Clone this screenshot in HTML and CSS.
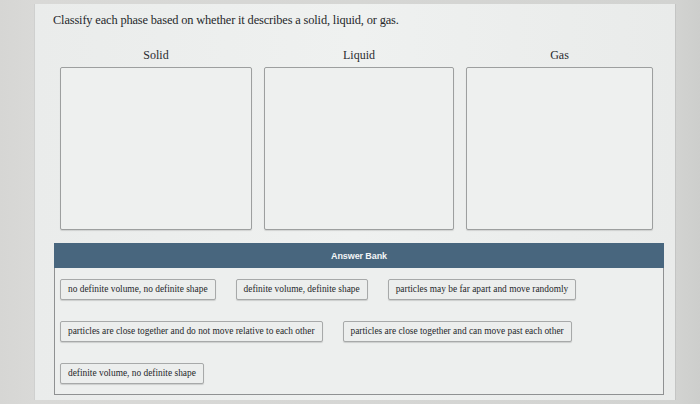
FILE: index.html
```html
<!DOCTYPE html>
<html lang="en">
<head>
<meta charset="utf-8">
<title>Classify phases</title>
<link rel="stylesheet" href="styles.css">
</head>
<body>
  <main class="panel">
    <p class="prompt">Classify each phase based on whether it describes a solid, liquid, or gas.</p>

    <div class="targets">
      <section class="target">
        <h2 class="target-label">Solid</h2>
        <div class="dropzone"></div>
      </section>
      <section class="target">
        <h2 class="target-label">Liquid</h2>
        <div class="dropzone"></div>
      </section>
      <section class="target">
        <h2 class="target-label">Gas</h2>
        <div class="dropzone"></div>
      </section>
    </div>

    <section class="bank">
      <header class="bank-head">Answer Bank</header>
      <div class="bank-body">
        <span class="chip">no definite volume, no definite shape</span>
        <span class="chip">definite volume, definite shape</span>
        <span class="chip">particles may be far apart and move randomly</span>
        <span class="chip">particles are close together and do not move relative to each other</span>
        <span class="chip">particles are close together and can move past each other</span>
        <span class="chip">definite volume, no definite shape</span>
      </div>
    </section>
  </main>
</body>
</html>
```

FILE: styles.css
```css
html, body {
  margin: 0;
  padding: 0;
}

body {
  width: 700px;
  height: 404px;
  overflow: hidden;
  background: linear-gradient(to right, #d6d6d4 0, #d9d9d7 34px, #d2d3d1 676px, #cdcecc 700px);
  font-family: "Liberation Serif", "Times New Roman", serif;
  color: #2f3133;
}

.panel {
  box-sizing: border-box;
  margin: 4px 0 0 34px;
  width: 642px;
  height: 396px;
  padding: 8px 13px 0 18px;
  background: linear-gradient(to right, #eaeceb, #eff1f0 50%, #e9ebea);
  border-left: 1px solid #cfd0cf;
  border-right: 1px solid #c4c5c4;
}

.prompt {
  margin: 0;
  font-size: 12.4px;
  line-height: 16px;
  letter-spacing: -0.15px;
  color: #26282b;
}

.targets {
  display: grid;
  grid-template-columns: 192px 190px 187px;
  column-gap: 12px;
  width: 593px;
  margin: 20px 0 0 7px;
}

.target {
  display: flex;
  flex-direction: column;
  align-items: stretch;
}

.target-label {
  margin: 0 0 5px;
  font-size: 12px;
  font-weight: normal;
  line-height: 14px;
  text-align: center;
  color: #2a2c2f;
}

.dropzone {
  height: 161px;
  border: 1px solid #9d9f9f;
  border-radius: 2px;
  background: #eef0ef;
  box-shadow: 0 1px 1px rgba(0, 0, 0, 0.12);
}

.bank {
  width: 610px;
  margin: 13px 0 0 1px;
}

.bank-head {
  height: 25px;
  line-height: 26px;
  background: #48667e;
  color: #f3f5f7;
  font-family: "Liberation Sans", Arial, sans-serif;
  font-size: 9px;
  font-weight: bold;
  text-align: center;
  letter-spacing: -0.1px;
}

.bank-body {
  box-sizing: border-box;
  height: 127px;
  padding: 11px 8px 10px 5px;
  border: 1px solid #8f9192;
  border-top: none;
  display: flex;
  flex-wrap: wrap;
  align-content: flex-start;
  column-gap: 20px;
  row-gap: 21px;
  background: #edefee;
}

.chip {
  padding: 3px 7px;
  font-size: 9.4px;
  line-height: 13px;
  color: #26282b;
  background: #eceeed;
  border: 1px solid #a7a9a9;
  border-radius: 2px;
  box-shadow: 0 1px 1px rgba(0, 0, 0, 0.14);
  white-space: nowrap;
}
```
